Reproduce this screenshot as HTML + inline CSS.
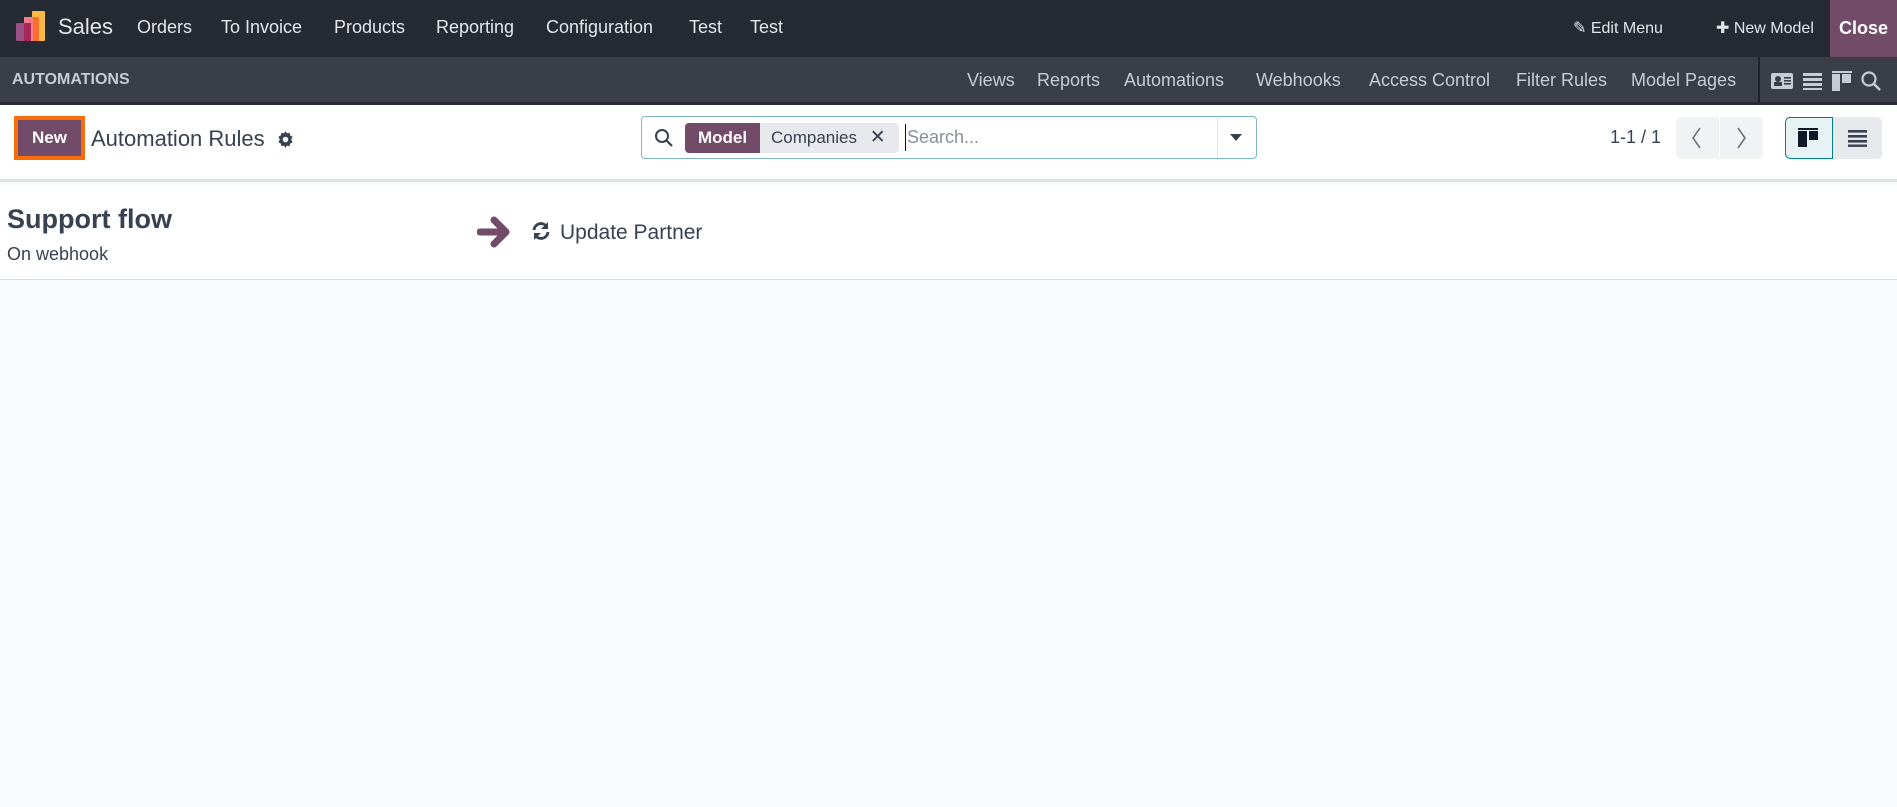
<!DOCTYPE html>
<html><head><meta charset="utf-8"><style>
*{box-sizing:border-box;margin:0;padding:0}
body{width:1897px;height:807px;overflow:hidden;background:#f9fafb;font-family:"Liberation Sans",sans-serif;position:relative}
.a{position:absolute;white-space:nowrap}
.top{position:absolute;left:0;top:0;width:1897px;height:57px;background:#262a33}
.top .a{color:#e4e6ea;font-size:18px;top:17px}
.sub{position:absolute;left:0;top:57px;width:1897px;height:48px;background:#3a3e47;border-bottom:3px solid #262a33}
.sub .a{color:#c9ccd2;font-size:18px;top:13px}
.cp{position:absolute;left:0;top:105px;width:1897px;height:77px;background:#fff;border-bottom:3px solid #dee2e6}
.row{position:absolute;left:0;top:185px;width:1897px;height:95px;background:#fff;border-bottom:1px solid #d8dadd}
</style></head><body>
<div class="top">
  <svg class="a" style="left:15px;top:10px" width="32" height="32" viewBox="0 0 32 32">
    <rect x="17" y="1" width="13" height="30" rx="1" fill="#fbb945"/>
    <rect x="16" y="7" width="8" height="24" fill="#fc6f2b"/>
    <rect x="9" y="7" width="9" height="24" fill="#f67e8b"/>
    <rect x="1" y="13" width="10" height="18" rx="1" fill="#985184"/>
    <rect x="9" y="13" width="7" height="18" fill="#a52857"/>
  </svg>
  <div class="a" style="left:58px;top:14px;font-size:22px;color:#e4e6ea">Sales</div>
  <div class="a" style="left:137px">Orders</div>
  <div class="a" style="left:221px">To Invoice</div>
  <div class="a" style="left:334px">Products</div>
  <div class="a" style="left:436px">Reporting</div>
  <div class="a" style="left:546px">Configuration</div>
  <div class="a" style="left:689px">Test</div>
  <div class="a" style="left:750px">Test</div>
  <div class="a" style="left:1573px;font-size:16px;top:18px">✎ Edit Menu</div>
  <div class="a" style="left:1716px;font-size:16px;top:18px">✚ New Model</div>
  <div class="a" style="left:1830px;top:0;width:67px;height:57px;background:#714b67;color:#fff;font-weight:bold;font-size:18px;line-height:57px;text-align:center">Close</div>
</div>
<div class="sub">
  <div class="a" style="left:12px;top:14px;font-size:16px;font-weight:bold;color:#c9ccd2">AUTOMATIONS</div>
  <div class="a" style="left:967px">Views</div>
  <div class="a" style="left:1037px">Reports</div>
  <div class="a" style="left:1124px">Automations</div>
  <div class="a" style="left:1256px">Webhooks</div>
  <div class="a" style="left:1369px">Access Control</div>
  <div class="a" style="left:1516px">Filter Rules</div>
  <div class="a" style="left:1631px">Model Pages</div>
  <div class="a" style="left:1758px;top:0;width:2px;height:45px;background:#1e2128"></div>
  <svg class="a" style="left:1770px;top:13px" width="115" height="22" viewBox="0 0 115 22">
    <rect x="1" y="3" width="22" height="16" rx="2" fill="#c9ccd2"/>
    <circle cx="8" cy="9" r="3" fill="#3a3e47"/><rect x="4" y="12" width="8" height="4" fill="#3a3e47"/>
    <rect x="14" y="7" width="7" height="1.6" fill="#3a3e47"/><rect x="14" y="10" width="7" height="1.6" fill="#3a3e47"/><rect x="14" y="13" width="7" height="1.6" fill="#3a3e47"/>
    <rect x="33" y="3" width="19" height="3" fill="#c9ccd2"/><rect x="33" y="8" width="19" height="3" fill="#c9ccd2"/><rect x="33" y="13" width="19" height="3" fill="#c9ccd2"/><rect x="33" y="18" width="19" height="2" fill="#c9ccd2"/>
    <rect x="62" y="1" width="20" height="2" fill="#c9ccd2"/><rect x="62" y="4" width="8" height="17" fill="#c9ccd2"/><rect x="72" y="4" width="9" height="9" fill="#c9ccd2"/>
    <circle cx="99" cy="9" r="6.5" stroke="#c9ccd2" stroke-width="2.2" fill="none"/><line x1="104" y1="14" x2="110" y2="20" stroke="#c9ccd2" stroke-width="2.6"/>
  </svg>
</div>
<div class="cp">
  <div class="a" style="left:14px;top:11px;width:71px;height:44px;border:4px solid #f96d0b;background:#714b67;color:#fff;font-weight:bold;font-size:17px;line-height:36px;text-align:center">New</div>
  <div class="a" style="left:91px;top:21px;font-size:22px;color:#374151">Automation Rules</div>
  <svg class="a" style="left:277px;top:26px" width="17" height="17" viewBox="0 0 16 16"><path fill="#374151" d="M8 0l1.3 2.2 2.5-.6.6 2.5L14.6 5.4 13.4 8l1.2 2.6-2.2 1.3-.6 2.5-2.5-.6L8 16l-1.3-2.2-2.5.6-.6-2.5-2.2-1.3L2.6 8 1.4 5.4l2.2-1.3.6-2.5 2.5.6z"/><circle cx="8" cy="8" r="2.6" fill="#fff"/></svg>
  <div class="a" style="left:641px;top:11px;width:616px;height:43px;border:1px solid #7fb8bb;border-radius:4px;background:#fff"></div>
  <svg class="a" style="left:654px;top:23px" width="20" height="20" viewBox="0 0 20 20"><circle cx="8" cy="8" r="6" stroke="#374151" stroke-width="2" fill="none"/><line x1="12.5" y1="12.5" x2="18" y2="18" stroke="#374151" stroke-width="2.2"/></svg>
  <div class="a" style="left:685px;top:18px;width:75px;height:30px;background:#714b67;border-radius:4px 0 0 4px;color:#fff;font-weight:bold;font-size:17px;line-height:30px;text-align:center">Model</div>
  <div class="a" style="left:760px;top:18px;width:139px;height:30px;background:#e7e9ed;border-radius:0 4px 4px 0;color:#374151;font-size:17px;line-height:30px;padding-left:11px">Companies <span style="margin-left:8px;font-size:19px">✕</span></div>
  <div class="a" style="left:905px;top:19px;width:1px;height:27px;background:#111"></div>
  <div class="a" style="left:907px;top:22px;font-size:18px;color:#8a8f98">Search...</div>
  <div class="a" style="left:1217px;top:12px;width:1px;height:41px;background:#dee2e6"></div>
  <div class="a" style="left:1230px;top:29px;width:0;height:0;border-left:6px solid transparent;border-right:6px solid transparent;border-top:7px solid #374151"></div>
  <div class="a" style="left:1610px;top:22px;font-size:18px;color:#374151">1-1 / 1</div>
  <div class="a" style="left:1676px;top:12px;width:87px;height:42px;background:#f1f2f4;border-radius:5px"></div>
  <div class="a" style="left:1719px;top:12px;width:1px;height:42px;background:#fff"></div>
  <svg class="a" style="left:1690px;top:21px" width="64" height="24" viewBox="0 0 64 24"><path d="M10 2L3 12l7 10" stroke="#6b7280" stroke-width="1.6" fill="none"/><path d="M48 2l7 10-7 10" stroke="#6b7280" stroke-width="1.6" fill="none"/></svg>
  <div class="a" style="left:1785px;top:12px;width:48px;height:42px;background:#e6f2f3;border:1px solid #017e84;border-radius:5px 0 0 5px"></div>
  <div class="a" style="left:1833px;top:12px;width:49px;height:42px;background:#e7e9ed;border-radius:0 5px 5px 0"></div>
  <svg class="a" style="left:1798px;top:23px" width="22" height="20" viewBox="0 0 22 20"><rect x="0" y="0" width="20" height="2" fill="#111827"/><rect x="0" y="3" width="9" height="16" fill="#111827"/><rect x="11" y="3" width="9" height="9" fill="#111827"/></svg>
  <svg class="a" style="left:1848px;top:24px" width="20" height="18" viewBox="0 0 20 18"><rect y="1" width="19" height="2.6" fill="#374151"/><rect y="6" width="19" height="2.6" fill="#374151"/><rect y="11" width="19" height="2.6" fill="#374151"/><rect y="15.5" width="19" height="2.4" fill="#374151"/></svg>
</div>
<div class="row">
  <div class="a" style="left:7px;top:19px;font-size:27px;font-weight:bold;color:#374151">Support flow</div>
  <div class="a" style="left:7px;top:59px;font-size:18px;color:#374151">On webhook</div>
  <svg class="a" style="left:477px;top:30px" width="34" height="34" viewBox="0 0 34 34"><path d="M3 17h24M17 5l12 12-12 12" stroke="#714b67" stroke-width="7" stroke-linecap="round" stroke-linejoin="round" fill="none"/></svg>
  <svg class="a" style="left:531px;top:36px" width="20" height="20" viewBox="0 0 20 20"><path d="M3 9a7 7 0 0 1 13-3" stroke="#374151" stroke-width="2.8" fill="none"/><path d="M17 1v7h-7z" fill="#374151"/><path d="M17 11a7 7 0 0 1-13 3" stroke="#374151" stroke-width="2.8" fill="none"/><path d="M3 19v-7h7z" fill="#374151"/></svg>
  <div class="a" style="left:560px;top:36px;font-size:21px;color:#374151">Update Partner</div>
</div>
</body></html>
